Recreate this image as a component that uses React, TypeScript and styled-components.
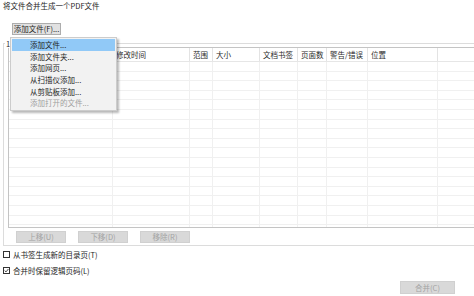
import styled, { createGlobalStyle } from 'styled-components';

const GlobalStyle = createGlobalStyle`
  html, body {
    margin: 0;
    padding: 0;
    overflow: hidden;
    background: #ffffff;
  }
  body {
    font-family: "Noto Sans CJK SC", "Noto Sans", sans-serif;
    font-size: 7.5px;
    color: #1e1e1e;
  }
`;

const Page = styled.div`
  width: 474px;
  height: 296px;
  display: flex;
  flex-direction: column;
  overflow: hidden;
`;

const Title = styled.div`
  height: 12px;
  line-height: 12px;
  padding-left: 3px;
  white-space: nowrap;
`;

const AddRow = styled.div`
  margin-top: 11px;
  padding-left: 12px;
  display: flex;
`;

const AddWrap = styled.div`
  position: relative;
`;

const Button = styled.button<{ $width: number; $height?: number; $disabled?: boolean }>`
  box-sizing: border-box;
  width: ${({ $width }) => $width}px;
  height: ${({ $height }) => $height ?? 12}px;
  padding: 0;
  margin: 0;
  font-family: inherit;
  font-size: 7.5px;
  line-height: 10px;
  background: ${({ $disabled }) => ($disabled ? '#d9d9d9' : '#e1e1e1')};
  border: 1px solid ${({ $disabled }) => ($disabled ? '#d0d0d0' : '#adadad')};
  color: ${({ $disabled }) => ($disabled ? '#a3a3a3' : '#1e1e1e')};
  white-space: nowrap;
`;

const Menu = styled.div`
  position: absolute;
  left: -2px;
  top: 14px;
  width: 107px;
  box-sizing: border-box;
  padding: 1px;
  background: #f2f2f2;
  border: 1px solid #cccccc;
  box-shadow: 2px 2px 2px rgba(0, 0, 0, 0.28);
  z-index: 5;
`;

const MenuItem = styled.div<{ $active?: boolean; $disabled?: boolean }>`
  height: 11.7px;
  line-height: 11.7px;
  padding-left: 18px;
  white-space: nowrap;
  background: ${({ $active }) => ($active ? '#91c9f7' : 'transparent')};
  color: ${({ $disabled }) => ($disabled ? '#a0a0a0' : '#1e1e1e')};
`;

/* group box runs past the right edge of the window, so no right border */
const Group = styled.div`
  position: relative;
  margin-top: 8px;
  margin-left: 3px;
  box-sizing: border-box;
  border: 1px solid #dcdcdc;
  border-right: none;
  padding: 3px 0 1px 4px;
`;

const Legend = styled.span`
  position: absolute;
  left: 1px;
  top: -5px;
  padding: 0 1px;
  background: #ffffff;
  line-height: 9px;
`;

const ListView = styled.div`
  box-sizing: border-box;
  height: 181px;
  border: 1px solid #c4c4c4;
  border-right: none;
  background: #ffffff;
  overflow: hidden;
`;

const columns = '104px 77px 23px 47px 38px 29px 41px 70px 80px';

const HeaderRow = styled.div`
  display: grid;
  grid-template-columns: ${columns};
  height: 13px;
  border-bottom: 1px solid #e6e6e6;
`;

const HeaderCell = styled.div`
  border-right: 1px solid #e3e3e3;
  padding-left: 3px;
  line-height: 13px;
  white-space: nowrap;
  color: #2a2a2a;
`;

const Row = styled.div`
  display: grid;
  grid-template-columns: ${columns};
  height: 9.6px;
  box-sizing: border-box;
  border-bottom: 1px solid #f0f0f0;
`;

const Cell = styled.div`
  border-right: 1px solid #f0f0f0;
`;

const MoveRow = styled.div`
  display: flex;
  gap: 12px;
  padding: 3px 0 1px 8px;
`;

const CheckRow = styled.label`
  display: flex;
  align-items: center;
  gap: 3px;
  height: 16px;
  padding-left: 3px;
  white-space: nowrap;
`;

const Box = styled.span`
  box-sizing: border-box;
  width: 7px;
  height: 7px;
  border: 1px solid #333333;
  background: #ffffff;
  display: flex;
  align-items: center;
  justify-content: center;
`;

const Footer = styled.div`
  margin-top: 3px;
  padding-left: 400px;
  display: flex;
`;

const headers = ['', '修改时间', '范围', '大小', '文档书签', '页面数', '警告/错误', '位置', ''];

const menuItems = [
  { label: '添加文件...', active: true },
  { label: '添加文件夹...' },
  { label: '添加网页...' },
  { label: '从扫描仪添加...' },
  { label: '从剪贴板添加...' },
  { label: '添加打开的文件...', disabled: true },
];

export default function App() {
  return (
    <>
      <GlobalStyle />
      <Page>
        <Title>将文件合并生成一个PDF文件</Title>
        <AddRow>
          <AddWrap>
            <Button $width={49}>添加文件(F)...</Button>
            <Menu>
              {menuItems.map((item) => (
                <MenuItem key={item.label} $active={item.active} $disabled={item.disabled}>
                  {item.label}
                </MenuItem>
              ))}
            </Menu>
          </AddWrap>
        </AddRow>

        <Group>
          <Legend>1</Legend>
          <ListView>
            <HeaderRow>
              {headers.map((h, i) => (
                <HeaderCell key={i}>{h}</HeaderCell>
              ))}
            </HeaderRow>
            {Array.from({ length: 18 }).map((_, r) => (
              <Row key={r}>
                {headers.map((_, c) => (
                  <Cell key={c} />
                ))}
              </Row>
            ))}
          </ListView>
          <MoveRow>
            <Button $width={50} $disabled>上移(U)</Button>
            <Button $width={50} $disabled>下移(D)</Button>
            <Button $width={50} $disabled>移除(R)</Button>
          </MoveRow>
        </Group>

        <CheckRow>
          <Box />
          从书签生成新的目录页(T)
        </CheckRow>
        <CheckRow>
          <Box>
            <svg width="5" height="5" viewBox="0 0 5 5">
              <path d="M0.6 2.5 L2 3.9 L4.4 1" fill="none" stroke="#333" strokeWidth="0.9" />
            </svg>
          </Box>
          合并时保留逻辑页码(L)
        </CheckRow>

        <Footer>
          <Button $width={55} $height={13} $disabled>合并(C)</Button>
        </Footer>
      </Page>
    </>
  );
}
